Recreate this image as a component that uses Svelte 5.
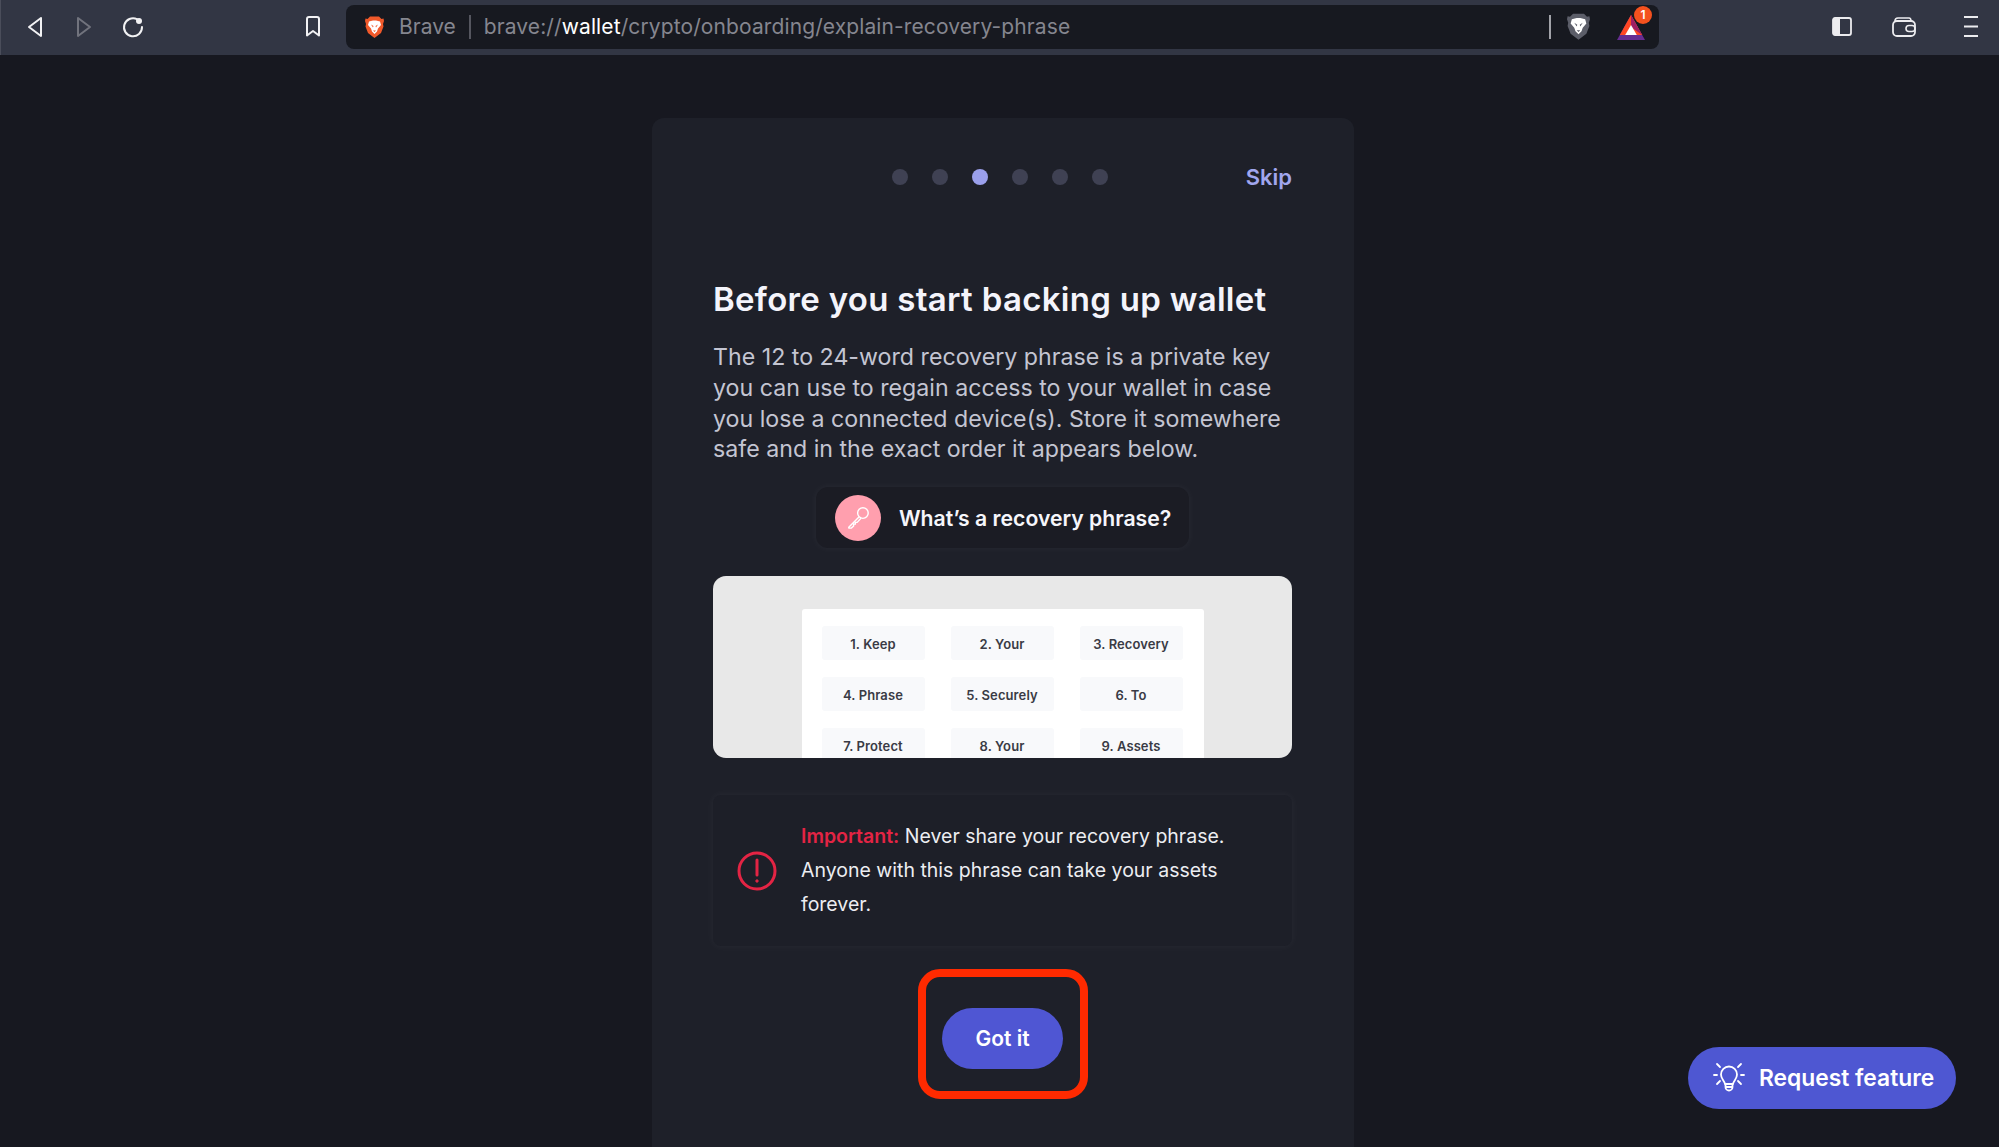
<script>
  const dots = [0, 1, 2, 3, 4, 5];
  const activeDot = 2;
  const words = ['1. Keep', '2. Your', '3. Recovery', '4. Phrase', '5. Securely', '6. To', '7. Protect', '8. Your', '9. Assets'];
</script>

<div class="page">
  <header class="toolbar">
    <div class="nav">
      <svg class="ico" width="16" height="22" viewBox="0 0 16 22"><path d="M14 2 L2 11 L14 20 Z" fill="none" stroke="#f2f2f4" stroke-width="2" stroke-linejoin="round" /></svg>
      <svg class="ico fwd" width="16" height="22" viewBox="0 0 16 22"><path d="M2 2 L14 11 L2 20 Z" fill="none" stroke="#71737d" stroke-width="2" stroke-linejoin="round" /></svg>
      <svg class="ico reload" width="22" height="22" viewBox="0 0 22 22"><path d="M15 3.2 A9 9 0 1 0 20 11" fill="none" stroke="#f2f2f4" stroke-width="2" stroke-linecap="round" /><circle cx="17" cy="5" r="3" fill="#f2f2f4" /></svg>
      <svg class="ico mark" width="16" height="21" viewBox="0 0 16 21"><path d="M2 3 Q2 1 4 1 H12 Q14 1 14 3 V19.5 L8 15 L2 19.5 Z" fill="none" stroke="#f2f2f4" stroke-width="2" stroke-linejoin="round" /></svg>
    </div>

    <div class="address">
      <svg class="shield-sm" width="19" height="22" viewBox="0 0 38 44">
        <path d="M10 1 H28 L33 6 L37 5 L38 10 L36 16 L37 21 L32 34 L19 44 L6 34 L1 21 L2 16 L0 10 L1 5 L5 6 Z" fill="#f1592a" />
        <path d="M8 11 L16 9 H22 L30 11 L32 18 L26 25 L24 31 L19 36 L14 31 L12 25 L6 18 Z" fill="#fff" />
        <path d="M12 17 L17 20 L16 23 Z M26 17 L21 20 L22 23 Z M16 29 H22 L19 32 Z" fill="#f1592a" />
      </svg>
      <span class="site">Brave</span>
      <span class="sep"></span>
      <span class="url">brave://<b>wallet</b>/crypto/onboarding/explain-recovery-phrase</span>
      <span class="sep right"></span>
      <svg class="shield-lg" width="23" height="27" viewBox="0 0 38 44">
        <path d="M10 1 H28 L33 6 L37 5 L38 10 L36 16 L37 21 L32 34 L19 44 L6 34 L1 21 L2 16 L0 10 L1 5 L5 6 Z" fill="#5c5e69" />
        <path d="M8 10 L16 8 H22 L30 10 L32 17 L26 24 L24 30 L19 35 L14 30 L12 24 L6 17 Z" fill="#fff" />
        <path d="M12 16 L17 19 L16 22 Z M26 16 L21 19 L22 22 Z M16 28 H22 L19 31 Z" fill="#5c5e69" />
      </svg>
      <div class="bat">
        <svg width="28" height="25" viewBox="0 0 28 25">
          <path d="M14 0 L28 25 H0 Z" fill="#662d91" />
          <path d="M14 0 L25.2 20 H2.8 Z" fill="#ff4724" />
          <path d="M14 0 L25.2 20 L14 12 Z" fill="#9e1f63" />
          <path d="M14 10 L19.8 20 H8.2 Z" fill="#fff" />
        </svg>
        <span class="badge">1</span>
      </div>
    </div>

    <div class="tools">
      <svg width="20" height="19" viewBox="0 0 20 19"><rect x="1" y="1" width="18" height="17" rx="2" fill="none" stroke="#ececef" stroke-width="1.8" /><path d="M1 1 H8 V18 H1 Z" fill="#ececef" /></svg>
      <svg width="24" height="20" viewBox="0 0 24 20"><path d="M3 4 Q3 1 6 1 H17 Q19 1 19 4" fill="none" stroke="#ececef" stroke-width="1.6" /><rect x="1" y="4" width="22" height="15" rx="4" fill="none" stroke="#ececef" stroke-width="1.8" /><rect x="14" y="8.5" width="9" height="6" rx="3" fill="none" stroke="#ececef" stroke-width="1.6" /></svg>
      <svg class="menu" width="14" height="21" viewBox="0 0 14 21"><path d="M0 1 H14 M0 10.5 H14 M0 20 H14" stroke="#ececef" stroke-width="2" /></svg>
    </div>
  </header>

  <main class="stage">
    <section class="card">
      <div class="steps">
        <div class="dots">
          {#each dots as d}
            <span class="dot" class:active={d === activeDot}></span>
          {/each}
        </div>
        <span class="skip">Skip</span>
      </div>

      <h1>Before you start backing up wallet</h1>
      <p class="lead">The 12 to 24-word recovery phrase is a private key you can use to regain access to your wallet in case you lose a connected device(s). Store it somewhere safe and in the exact order it appears below.</p>

      <div class="help">
        <span class="key">
          <svg width="23" height="23" viewBox="0 0 26 26" fill="none" stroke="#fff" stroke-width="1.6" stroke-linejoin="round">
            <circle cx="18" cy="8" r="6" />
            <path d="M13.8 12.2 L2 24 V25 H5 L7.5 22.5 V20.5 H9.5 V18.5 H11.5 L15.8 13.8" />
          </svg>
        </span>
        <span>What’s a recovery phrase?</span>
      </div>

      <div class="preview">
        <div class="sheet">
          {#each words as word}
            <span class="chip">{word}</span>
          {/each}
        </div>
      </div>

      <div class="alert">
        <svg width="40" height="40" viewBox="0 0 40 40" fill="none" stroke="#e32444" stroke-width="3">
          <circle cx="20" cy="20" r="18" />
          <path d="M20 9 V24" stroke-linecap="round" />
          <circle cx="20" cy="30" r="1.2" fill="#e32444" stroke-width="1" />
        </svg>
        <p><strong>Important:</strong> Never share your recovery phrase. Anyone with this phrase can take your assets forever.</p>
      </div>

      <div class="highlight">
        <button class="got">Got it</button>
      </div>
    </section>
  </main>

  <button class="request">
    <svg width="32" height="32" viewBox="0 0 32 32" fill="none" stroke="#fff" stroke-width="1.8" stroke-linecap="round">
      <path d="M12 22 C11 18 8 17 8 12.5 A8 8 0 0 1 24 12.5 C24 17 21 18 20 22 Z" stroke-linejoin="round" />
      <path d="M12.5 22 V25 A3.5 3.5 0 0 0 19.5 25 V22 M12.5 25 H19.5" />
      <path d="M4 2 L7 5 M28 2 L25 5 M1 13 H4 M28 13 H31 M4 22 L7 19 M28 22 L25 19" />
    </svg>
    Request feature
  </button>
</div>

<style>
  :global(body) {
    margin: 0;
    background: #171820;
  }

  .page {
    position: relative;
    height: 1147px;
    overflow: hidden;
    background: #171820;
    font-family: Inter, "Liberation Sans", sans-serif;
  }

  .toolbar {
    display: flex;
    align-items: center;
    height: 55px;
    padding-bottom: 2px;
    background: #323644;
    border-left: 1px solid #4a4d5a;
    box-sizing: border-box;
  }

  .nav {
    display: flex;
    align-items: center;
    width: 345px;
    padding-left: 26px;
    box-sizing: border-box;
  }

  .ico { display: block; }
  .fwd { margin-left: 33px; }
  .reload { margin-left: 30px; }
  .mark { margin-left: 161px; }

  .address {
    display: flex;
    align-items: center;
    width: 1313px;
    height: 44px;
    padding-left: 19px;
    box-sizing: border-box;
    background: #171920;
    border-radius: 8px;
    font-size: 21px;
    color: #85868f;
  }

  .site { margin-left: 15px; }

  .sep {
    width: 2px;
    height: 24px;
    margin: 0 13px;
    background: #55565f;
  }

  .sep.right {
    margin: 0 0 0 auto;
    background: #a2a3a9;
  }

  .url {
    letter-spacing: 0.11px;
  }

  .url b {
    font-weight: 400;
    color: #fff;
  }

  .shield-lg { margin-left: 16px; }

  .bat {
    position: relative;
    display: flex;
    margin-left: 27px;
    margin-right: 14px;
    padding-top: 1px;
  }

  .badge {
    position: absolute;
    top: -8px;
    right: -7px;
    width: 18px;
    height: 18px;
    border-radius: 50%;
    background: #f4511e;
    color: #fff;
    font-size: 12px;
    font-weight: 600;
    line-height: 18px;
    text-align: center;
  }

  .tools {
    display: flex;
    align-items: center;
    gap: 40px;
    margin-left: 173px;
  }

  .menu { margin-left: 8px; }

  .stage {
    display: flex;
    justify-content: center;
    padding-top: 63px;
    padding-left: 7px;
  }

  .card {
    width: 702px;
    height: 1040px;
    padding: 47px 62px 0 61px;
    box-sizing: border-box;
    background: #1e2029;
    border-radius: 12px 12px 0 0;
  }

  .steps {
    display: flex;
    align-items: center;
    height: 24px;
  }

  .dots {
    display: flex;
    gap: 24px;
    margin-left: 179px;
  }

  .dot {
    width: 16px;
    height: 16px;
    border-radius: 50%;
    background: #3f4153;
  }

  .dot.active { background: #9ba0ec; }

  .skip {
    margin-left: auto;
    padding-bottom: 1px;
    color: #a1a6ee;
    font-size: 22px;
    font-weight: 600;
  }

  h1 {
    margin: 88px 0 0;
    color: #f4f4fb;
    font-size: 33px;
    font-weight: 600;
    line-height: 44px;
    letter-spacing: 0.3px;
  }

  .lead {
    margin: 21px 0 0;
    color: #c4c5d2;
    font-size: 23.2px;
    line-height: 30.8px;
  }

  .help {
    display: flex;
    align-items: center;
    gap: 18px;
    width: 373px;
    height: 61px;
    margin: 22px auto 0;
    padding-left: 19px;
    box-sizing: border-box;
    background: #1b1c24;
    border-radius: 12px;
    box-shadow: 0 0 8px rgba(255, 255, 255, 0.05);
    color: #f6f6fb;
    font-size: 21.2px;
    font-weight: 600;
  }

  .key {
    display: flex;
    align-items: center;
    justify-content: center;
    width: 46px;
    height: 46px;
    border-radius: 50%;
    background: #ff9fae;
  }

  .preview {
    display: flex;
    justify-content: center;
    height: 182px;
    margin-top: 28px;
    padding-top: 33px;
    box-sizing: border-box;
    overflow: hidden;
    background: #e8e8e8;
    border-radius: 13px;
  }

  .sheet {
    display: grid;
    grid-template-columns: repeat(3, 103px);
    grid-auto-rows: 34px;
    gap: 17px 26px;
    width: 402px;
    height: 180px;
    padding: 17px 20px;
    box-sizing: border-box;
    background: #fff;
    border-radius: 3px 3px 0 0;
  }

  .chip {
    display: flex;
    align-items: center;
    justify-content: center;
    padding-top: 1px;
    box-sizing: border-box;
    background: #f8f9fb;
    border-radius: 3px;
    color: #3a3b45;
    font-size: 13px;
    font-weight: 600;
    letter-spacing: 0.1px;
  }

  .alert {
    display: flex;
    align-items: center;
    gap: 24px;
    height: 151px;
    margin-top: 37px;
    padding: 0 24px;
    box-sizing: border-box;
    background: #1d1f28;
    border-radius: 8px;
    box-shadow: 0 0 10px rgba(255, 255, 255, 0.05);
  }

  .alert svg { flex: none; }

  .alert p {
    margin: -2px 0 0;
    color: #ecedf1;
    font-size: 19.5px;
    line-height: 34px;
  }

  .alert strong {
    color: #e32444;
    font-weight: 600;
  }

  .highlight {
    display: flex;
    align-items: center;
    justify-content: center;
    width: 170px;
    height: 130px;
    margin: 23px auto 0;
    padding-top: 8px;
    box-sizing: border-box;
    border: 8px solid #ff2a00;
    border-radius: 22px;
  }

  .got {
    width: 121px;
    height: 61px;
    border: 0;
    border-radius: 31px;
    background: #4f56d3;
    color: #fff;
    font: 600 21px Inter, sans-serif;
  }

  .request {
    position: absolute;
    top: 1047px;
    left: 1688px;
    display: flex;
    align-items: center;
    gap: 14px;
    width: 268px;
    height: 62px;
    padding: 0 0 1px 25px;
    box-sizing: border-box;
    border: 0;
    border-radius: 31px;
    background: #4e57d2;
    color: #fff;
    font: 600 22.8px Inter, sans-serif;
  }
</style>
